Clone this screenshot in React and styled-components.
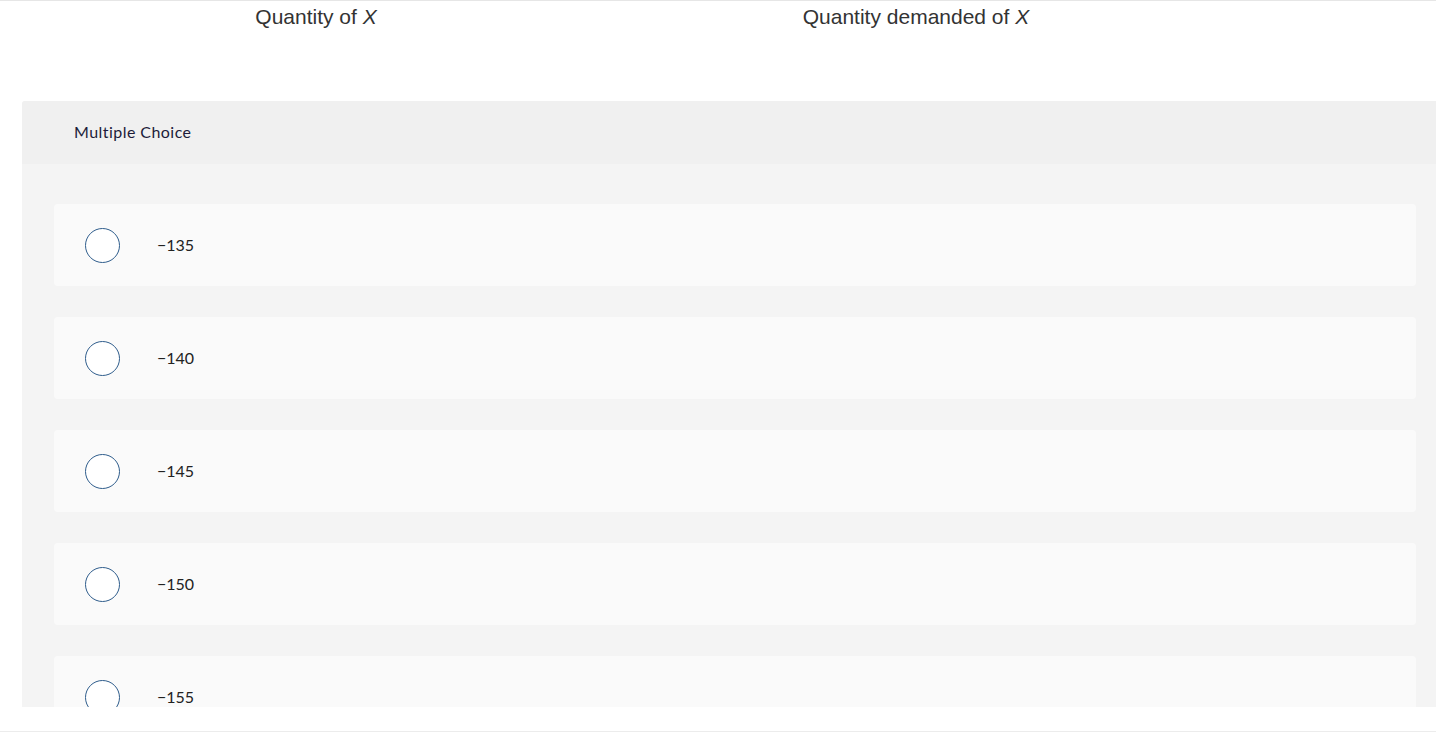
import React from "react";
import styled, { createGlobalStyle } from "styled-components";

const GlobalStyle = createGlobalStyle`
  html, body {
    margin: 0;
    padding: 0;
    background: #ffffff;
  }
`;

const options = ["\u2212135", "\u2212140", "\u2212145", "\u2212150", "\u2212155"];

function App() {
  return (
    <Page>
      <GlobalStyle />
      <TableHead>
        <HeadCell>
          Quantity of <Var>X</Var>
        </HeadCell>
        <HeadCell>
          Quantity demanded of <Var>X</Var>
        </HeadCell>
      </TableHead>
      <Panel>
        <PanelHeader>Multiple Choice</PanelHeader>
        <PanelBody>
          {options.map((o) => (
            <Option key={o}>
              <Radio />
              <Label>{o}</Label>
            </Option>
          ))}
        </PanelBody>
      </Panel>
      <Footer />
    </Page>
  );
}

export default App;

const Page = styled.div`
  width: 1436px;
  height: 733px;
  overflow: hidden;
  display: flex;
  flex-direction: column;
`;

const TableHead = styled.div`
  display: grid;
  grid-template-columns: 600px 600px;
  padding-left: 16px;
  border-top: 1px solid #e6e6e6;
  height: 101px;
  box-sizing: border-box;
  flex-shrink: 0;
`;

const HeadCell = styled.div`
  text-align: center;
  font-family: "Liberation Sans", Arial, sans-serif;
  font-size: 21px;
  color: #333333;
  padding-top: 4px;
  line-height: 24px;
`;

const Var = styled.i``;

const Panel = styled.div`
  margin-left: 22px;
  height: 606px;
  overflow: hidden;
  background: #f4f4f4;
  border-top-left-radius: 3px;
  flex-shrink: 0;
`;

const PanelHeader = styled.div`
  height: 63px;
  box-sizing: border-box;
  padding-bottom: 2px;
  background: #f0f0f0;
  display: flex;
  align-items: center;
  padding-left: 52px;
  font-family: Lato, "Open Sans", sans-serif;
  font-size: 16px;
  letter-spacing: 0.45px;
  color: #1c1c3a;
`;

const PanelBody = styled.div`
  display: flex;
  flex-direction: column;
  gap: 31px;
  padding: 40px 20px 0 32px;
`;

const Option = styled.div`
  height: 82px;
  flex-shrink: 0;
  background: #fafafa;
  border-radius: 4px;
  display: flex;
  align-items: center;
  padding-left: 31px;
`;

const Radio = styled.span`
  width: 33px;
  height: 33px;
  border: 1.5px solid #2f5d8c;
  border-radius: 50%;
  background: #ffffff;
  flex-shrink: 0;
`;

const Label = styled.span`
  margin-left: 37px;
  margin-bottom: 2px;
  font-family: Lato, "Open Sans", sans-serif;
  font-size: 16px;
  color: #222222;
`;

const Footer = styled.div`
  height: 24px;
  border-bottom: 1px solid #ececec;
  flex-shrink: 0;
`;
